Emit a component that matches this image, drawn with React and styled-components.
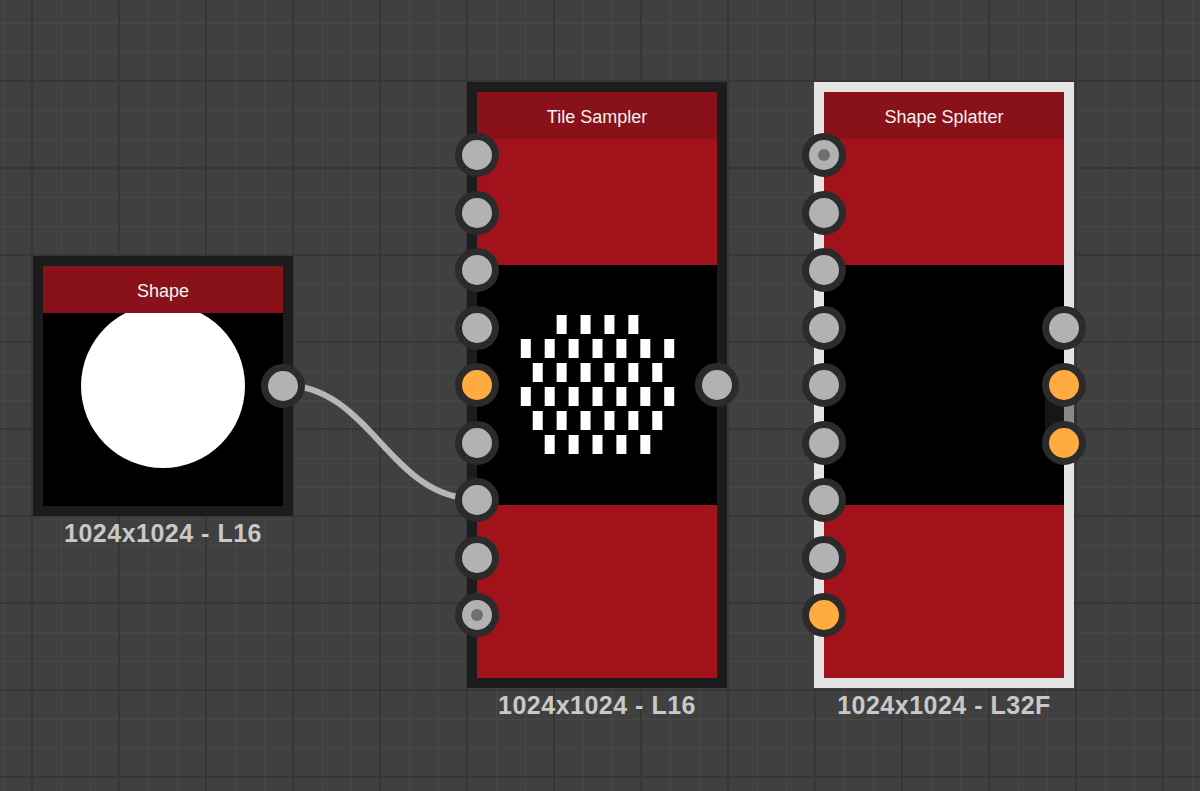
import React from 'react';
import styled, { createGlobalStyle } from 'styled-components';

const GlobalStyle = createGlobalStyle`
  html, body {
    margin: 0;
    height: 100%;
    overflow: hidden;
  }
  body {
    font-family: 'Liberation Sans', Arial, sans-serif;
    background-color: #404040;
    background-image:
      linear-gradient(90deg, #363636 2px, transparent 2px),
      linear-gradient(180deg, #363636 2px, transparent 2px),
      linear-gradient(90deg, #484848 1px, transparent 1px),
      linear-gradient(180deg, #484848 1px, transparent 1px);
    background-size: 87px 87px, 87px 87px, 29px 29px, 29px 29px;
    background-position: 31px 0, 0 80px, 32px 0, 0 23px;
  }
`;

const Canvas = styled.div`
  position: relative;
  width: 100vw;
  height: 100vh;
`;

const Wires = styled.svg`
  position: absolute;
  left: 0;
  top: 0;
  width: 100%;
  height: 100%;
`;

// node frame sits at its place on the graph canvas
const NodeWrap = styled.div`
  position: absolute;
  left: ${p => p.$x}px;
  top: ${p => p.$y}px;
  display: flex;
  flex-direction: column;
  align-items: center;
`;

const NodeBox = styled.div`
  border: 10px solid ${p => (p.$selected ? '#e4e4e4' : '#1c1c1c')};
`;

const Inner = styled.div`
  position: relative;
  width: 240px;
  display: flex;
  flex-direction: column;
`;

const Header = styled.div`
  position: absolute;
  top: 0;
  left: 0;
  right: 0;
  height: 47px;
  box-sizing: border-box;
  padding-top: 3px;
  background: #88111a;
  color: #f2f2f2;
  font-size: 18px;
  display: flex;
  align-items: center;
  justify-content: center;
  z-index: 1;
`;

const Pad = styled.div`
  height: ${p => p.$h}px;
  background: #a1121b;
`;

const Preview = styled.svg`
  display: block;
  width: 240px;
  height: 240px;
  background: #000;
`;

const PortColumn = styled.div`
  position: absolute;
  top: 0;
  bottom: 0;
  ${p => p.$side}: -22px;
  display: flex;
  flex-direction: column;
  justify-content: center;
  gap: 13.5px;
  z-index: 2;
`;

const PortGroup = styled.div`
  position: relative;
  display: flex;
  flex-direction: column;
  gap: 13.5px;

  &::before {
    content: '';
    position: absolute;
    top: 22px;
    bottom: 22px;
    left: 3px;
    right: 9px;
    background: rgba(43, 43, 43, 0.5);
  }
`;

const Port = styled.div`
  position: relative;
  width: 44px;
  height: 44px;
  box-sizing: border-box;
  border-radius: 50%;
  border: 7px solid #2b2b2b;
  background: ${p => (p.$hot ? '#ffab3f' : '#b2b2b2')};
  display: flex;
  align-items: center;
  justify-content: center;

  &::after {
    content: '';
    display: ${p => (p.$dot ? 'block' : 'none')};
    width: 12px;
    height: 12px;
    border-radius: 50%;
    background: #6f6f6f;
  }
`;

const Label = styled.div`
  margin-top: 5px;
  font-weight: 700;
  font-size: 25px;
  line-height: 25px;
  letter-spacing: 0.5px;
  color: #c8c8c8;
`;

const tileRows = [
  { n: 4, y: 50 },
  { n: 7, y: 74 },
  { n: 6, y: 98 },
  { n: 7, y: 122 },
  { n: 6, y: 146 },
  { n: 5, y: 170 },
];

function TilePattern() {
  const rects = [];
  tileRows.forEach((row, r) => {
    for (let k = 0; k < row.n; k++) {
      const x = 120.5 + (k - (row.n - 1) / 2) * 23.9 - 5;
      rects.push(<rect key={r + '-' + k} x={x} y={row.y} width="10" height="19" fill="#fff" />);
    }
  });
  return rects;
}

const Node = ({ x, y, title, selected, pad, label, left, right, children }) => (
  <NodeWrap $x={x} $y={y}>
    <NodeBox $selected={selected}>
      <Inner>
        <Header>{title}</Header>
        {pad > 0 && <Pad $h={pad} />}
        <Preview viewBox="0 0 240 240">{children}</Preview>
        {pad > 0 && <Pad $h={pad} />}
        {left && <PortColumn $side="left">{left}</PortColumn>}
        {right && <PortColumn $side="right">{right}</PortColumn>}
      </Inner>
    </NodeBox>
    <Label>{label}</Label>
  </NodeWrap>
);

const inputs = (hot, dots) =>
  Array.from({ length: 9 }, (_, i) => (
    <Port key={i} $hot={hot.includes(i)} $dot={dots.includes(i)} />
  ));

export default function App() {
  return (
    <Canvas>
      <GlobalStyle />
      <Wires>
        <path
          d="M 282 385 C 372 385, 388 499, 477 499"
          fill="none"
          stroke="#b7b7b7"
          strokeWidth="6"
        />
      </Wires>

      <Node
        x={33}
        y={256}
        title="Shape"
        pad={0}
        label="1024x1024 - L16"
        right={<Port />}
      >
        <circle cx="120" cy="120" r="82" fill="#fff" />
      </Node>

      <Node
        x={467}
        y={82}
        title="Tile Sampler"
        pad={173}
        label="1024x1024 - L16"
        left={inputs([4], [8])}
        right={<Port />}
      >
        <TilePattern />
      </Node>

      <Node
        x={814}
        y={82}
        title="Shape Splatter"
        selected
        pad={173}
        label="1024x1024 - L32F"
        left={inputs([8], [0])}
        right={
          <>
            <Port />
            <PortGroup>
              <Port $hot />
              <Port $hot />
            </PortGroup>
          </>
        }
      />
    </Canvas>
  );
}
